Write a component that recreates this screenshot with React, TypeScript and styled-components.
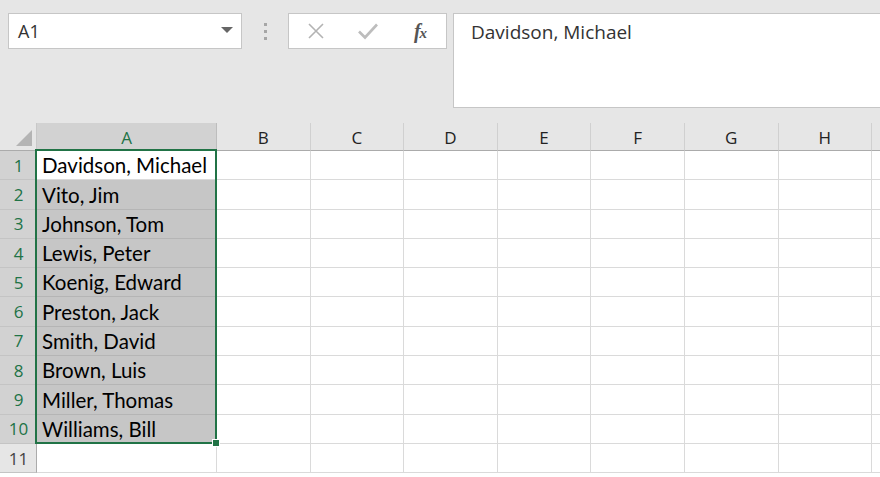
import styled, { createGlobalStyle } from "styled-components";

const GREEN = "#217346";
const COL_WIDTHS = [180, 93.6, 93.6, 93.6, 93.6, 93.6, 93.6, 93.6, 93.6];
const LETTERS = ["A", "B", "C", "D", "E", "F", "G", "H", ""];
const ROW_H = 29.3;
const HEAD_H = 28;
const ROWHEAD_W = 37;

const names = [
  "Davidson, Michael",
  "Vito, Jim",
  "Johnson, Tom",
  "Lewis, Peter",
  "Koenig, Edward",
  "Preston, Jack",
  "Smith, David",
  "Brown, Luis",
  "Miller, Thomas",
  "Williams, Bill",
  "",
];

const GlobalStyle = createGlobalStyle`
  html, body {
    margin: 0;
    padding: 0;
    background: #ffffff;
    overflow: hidden;
  }
  body {
    width: 880px;
    height: 477px;
    font-family: "Open Sans", "Noto Sans", sans-serif;
  }
`;

const Page = styled.div`
  width: 880px;
  height: 477px;
  overflow: hidden;
  background: #fff;
`;

const Ribbon = styled.div`
  height: 123px;
  background: #e6e6e6;
  display: flex;
  align-items: flex-start;
  padding: 13px 0 0 8px;
  box-sizing: border-box;
`;

const NameBox = styled.div`
  width: 234px;
  height: 36px;
  box-sizing: border-box;
  background: #fff;
  border: 1px solid #c6c6c6;
  display: flex;
  align-items: center;
  justify-content: space-between;
  padding: 0 8px 0 9px;
  font-size: 18px;
  color: #333;
`;

const Caret = styled.span`
  width: 0;
  height: 0;
  border-left: 6px solid transparent;
  border-right: 6px solid transparent;
  border-top: 6px solid #666;
  margin-top: -3px;
`;

const Grip = styled.div`
  width: 46px;
  height: 36px;
  display: flex;
  flex-direction: column;
  align-items: center;
  justify-content: center;
  gap: 4px;
`;

const GripDot = styled.span`
  width: 3px;
  height: 3px;
  background: #a6a6a6;
`;

const FormulaButtons = styled.div`
  width: 159px;
  height: 36px;
  box-sizing: border-box;
  background: #fff;
  border: 1px solid #c6c6c6;
  display: flex;
  align-items: center;
  padding: 0 0 0 12px;
  gap: 22px;
`;

const IconSlot = styled.span`
  width: 30px;
  display: flex;
  justify-content: center;
  align-items: center;
`;

const Fx = styled.span`
  font-family: "Liberation Serif", serif;
  font-style: italic;
  font-weight: bold;
  color: #555;
  font-size: 20px;
  letter-spacing: -1px;
  small {
    font-size: 15px;
  }
`;

const FormulaInput = styled.div`
  flex: 1;
  margin-left: 6px;
  height: 95px;
  box-sizing: border-box;
  background: #fff;
  border: 1px solid #c6c6c6;
  border-right: none;
  padding: 5px 0 0 17px;
  font-size: 19px;
  color: #333;
`;

const Sheet = styled.div`
  position: relative;
`;

const Row = styled.div<{ $h: number }>`
  display: flex;
  height: ${(p) => p.$h}px;
`;

const Corner = styled.div`
  width: ${ROWHEAD_W}px;
  flex: none;
  box-sizing: border-box;
  background: #e6e6e6;
  border-right: 1px solid #c8c8c8;
  border-bottom: 1px solid #ababab;
  position: relative;
`;

const CornerTri = styled.span`
  position: absolute;
  right: 4px;
  bottom: 4px;
  width: 0;
  height: 0;
  border-left: 16px solid transparent;
  border-bottom: 16px solid #b4b4b4;
`;

const ColHead = styled.div<{ $w: number; $sel?: boolean }>`
  width: ${(p) => p.$w}px;
  flex: none;
  box-sizing: border-box;
  background: ${(p) => (p.$sel ? "#d2d2d2" : "#e6e6e6")};
  color: ${(p) => (p.$sel ? GREEN : "#222")};
  border-right: 1px solid ${(p) => (p.$sel ? "#bdbdbd" : "#d0d0d0")};
  border-bottom: 1px solid ${(p) => (p.$sel ? GREEN : "#ababab")};
  display: flex;
  align-items: center;
  justify-content: center;
  font-size: 17px;
  padding-top: 1px;
`;

const RowHead = styled.div<{ $sel?: boolean }>`
  width: ${ROWHEAD_W}px;
  flex: none;
  box-sizing: border-box;
  background: ${(p) => (p.$sel ? "#d2d2d2" : "#e6e6e6")};
  color: ${(p) => (p.$sel ? GREEN : "#444")};
  border-right: 1px solid ${(p) => (p.$sel ? GREEN : "#ababab")};
  border-bottom: 1px solid #c4c4c4;
  display: flex;
  align-items: center;
  justify-content: center;
  font-size: 17px;
  padding-left: 1px;
`;

const Cell = styled.div<{ $w: number; $fill?: boolean }>`
  width: ${(p) => p.$w}px;
  flex: none;
  box-sizing: border-box;
  background: ${(p) => (p.$fill ? "#c6c6c6" : "#fff")};
  border-right: 1px solid ${(p) => (p.$fill ? "#b5b5b5" : "#dadada")};
  border-bottom: 1px solid ${(p) => (p.$fill ? "#b5b5b5" : "#dadada")};
  display: flex;
  align-items: flex-end;
  padding: 0 0 2px 5px;
  font-family: "Lato", "Open Sans", sans-serif;
  font-size: 20.5px;
  color: #000;
  white-space: nowrap;
  overflow: hidden;
`;

const Selection = styled.div`
  position: absolute;
  left: ${ROWHEAD_W - 2}px;
  top: ${HEAD_H - 2}px;
  width: ${COL_WIDTHS[0] + 2}px;
  height: ${ROW_H * 10 + 2}px;
  border: 2px solid ${GREEN};
  box-sizing: border-box;
  pointer-events: none;
`;

const Handle = styled.span`
  position: absolute;
  right: -5px;
  bottom: -5px;
  width: 6px;
  height: 6px;
  background: ${GREEN};
  border: 1px solid #fff;
`;

export default function App() {
  return (
    <Page>
      <GlobalStyle />
      <Ribbon>
        <NameBox>
          <span>A1</span>
          <Caret />
        </NameBox>
        <Grip>
          <GripDot />
          <GripDot />
          <GripDot />
        </Grip>
        <FormulaButtons>
          <IconSlot>
            <svg width="18" height="18" viewBox="0 0 18 18">
              <path d="M2 2 L16 16 M16 2 L2 16" stroke="#b3b3b3" strokeWidth="1.6" />
            </svg>
          </IconSlot>
          <IconSlot>
            <svg width="22" height="18" viewBox="0 0 22 18">
              <path d="M2 9.5 L8 15.5 L20 2.5" stroke="#bdbdbd" strokeWidth="2.6" fill="none" />
            </svg>
          </IconSlot>
          <IconSlot>
            <Fx>
              f<small>x</small>
            </Fx>
          </IconSlot>
        </FormulaButtons>
        <FormulaInput>Davidson, Michael</FormulaInput>
      </Ribbon>
      <Sheet>
        <Row $h={HEAD_H}>
          <Corner>
            <CornerTri />
          </Corner>
          {COL_WIDTHS.map((w, i) => (
            <ColHead key={i} $w={w} $sel={i === 0}>
              {LETTERS[i]}
            </ColHead>
          ))}
        </Row>
        {names.map((name, r) => (
          <Row key={r} $h={ROW_H}>
            <RowHead $sel={r < 10}>{r + 1}</RowHead>
            {COL_WIDTHS.map((w, c) => (
              <Cell key={c} $w={w} $fill={c === 0 && r > 0 && r < 10}>
                {c === 0 ? name : ""}
              </Cell>
            ))}
          </Row>
        ))}
        <Selection>
          <Handle />
        </Selection>
      </Sheet>
    </Page>
  );
}
